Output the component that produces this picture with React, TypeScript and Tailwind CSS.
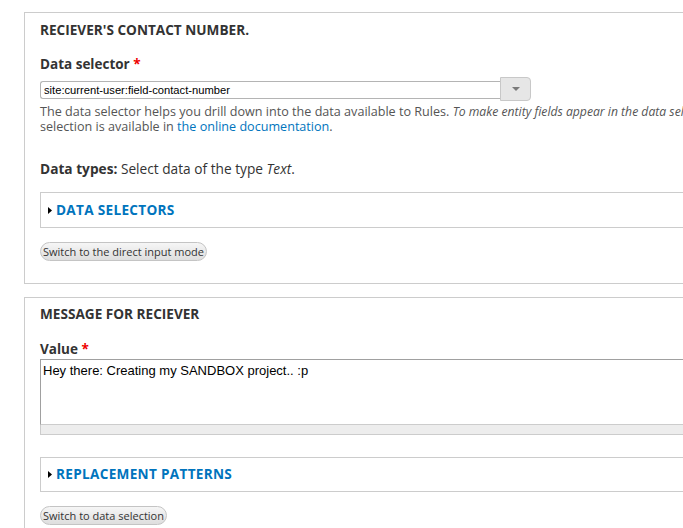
export default function App() {
  const body = { fontFamily: '"Open Sans", "DejaVu Sans", sans-serif' };
  const field = { fontFamily: '"Liberation Sans", Arial, sans-serif' };

  return (
    <div className="w-[683px] h-[528px] overflow-hidden bg-white text-[#333]" style={body}>
      <div className="pl-[24px] pt-[12px]">
        {/* Receiver's contact number */}
        <div className="w-[720px] h-[272px] border border-[#ccc] pl-[15px] pt-[9px]">
          <h2 className="text-[13.6px] leading-[16px] font-bold uppercase">Reciever's contact number.</h2>

          <label className="block mt-[18px] text-[13.5px] leading-[16px] font-bold">
            Data selector <span className="text-[#e00]">*</span>
          </label>

          <div className="mt-[5px] flex items-start h-[24px]">
            <input
              readOnly
              value="site:current-user:field-contact-number"
              className="mt-[4px] w-[460px] h-[18px] border border-[#b4b4b4] border-r-0 rounded-l-[3px] px-[3px] text-[11.2px] text-black outline-none"
              style={field}
            />
            <div className="w-[31px] h-[24px] border border-[#c8c8c8] rounded-r-[4px] bg-[#e6e6e6] flex items-center justify-center">
              <svg width="8" height="5" viewBox="0 0 8 5">
                <path d="M0 0h8L4 4z" fill="#7a7a7a" />
              </svg>
            </div>
          </div>

          <p className="mt-[3px] text-[12.6px] leading-[15px] text-[#555] whitespace-nowrap">
            The data selector helps you drill down into the data available to Rules.{" "}
            <em className="text-[12.2px]">To make entity fields appear in the data selector, you may have to use the condition 'entity has field'.</em>
            <br />
            selection is available in{" "}
            <a className="text-[#0074bd]">the online documentation</a>.
          </p>

          <p className="mt-[27px] text-[13.7px] leading-[16px]">
            <span className="font-bold">Data types:</span> Select data of the type <em>Text</em>.
          </p>

          <div className="mt-[15px] h-[36px] border border-[#ccc] flex items-center pl-[7px]">
            <svg width="4" height="7" viewBox="0 0 4 7" className="mr-[4px]">
              <path d="M0 0l4 3.5L0 7z" fill="#000" />
            </svg>
            <span className="text-[13.6px] tracking-[0.3px] font-bold uppercase text-[#0074bd]">Data selectors</span>
          </div>

          <button className="mt-[14px] h-[19px] px-[2px] rounded-[10px] border border-[#c4c4c4] bg-gradient-to-b from-[#f6f6f6] to-[#dedede] text-[11px] leading-[17px] text-[#333]">
            Switch to the direct input mode
          </button>
        </div>

        {/* Message for receiver */}
        <div className="mt-[13px] w-[720px] h-[260px] border border-[#ccc] pl-[15px] pt-[8px]">
          <h2 className="text-[13.6px] leading-[16px] font-bold uppercase">Message for reciever</h2>

          <label className="block mt-[19px] text-[13.5px] leading-[16px] font-bold">
            Value <span className="text-[#e00]">*</span>
          </label>

          <div className="mt-[2px]">
            <div
              className="h-[66px] border-t border-l border-[#a0a0a0] border-b-[#ccc] border-b px-[2px] pt-[3px] text-[13px] leading-[16px] text-black"
              style={field}
            >
              Hey there: Creating my SANDBOX project.. :p
            </div>
            <div className="h-[10px] bg-[#ededed] border-l border-b border-[#ccc]" />
          </div>

          <div className="mt-[22px] h-[35px] border border-[#ccc] flex items-center pl-[7px]">
            <svg width="4" height="7" viewBox="0 0 4 7" className="mr-[4px]">
              <path d="M0 0l4 3.5L0 7z" fill="#000" />
            </svg>
            <span className="text-[13.6px] tracking-[0.3px] font-bold uppercase text-[#0074bd]">Replacement patterns</span>
          </div>

          <button className="mt-[14px] h-[19px] px-[2px] rounded-[10px] border border-[#c4c4c4] bg-gradient-to-b from-[#f6f6f6] to-[#dedede] text-[11px] leading-[17px] text-[#333]">
            Switch to data selection
          </button>
        </div>
      </div>
    </div>
  );
}
